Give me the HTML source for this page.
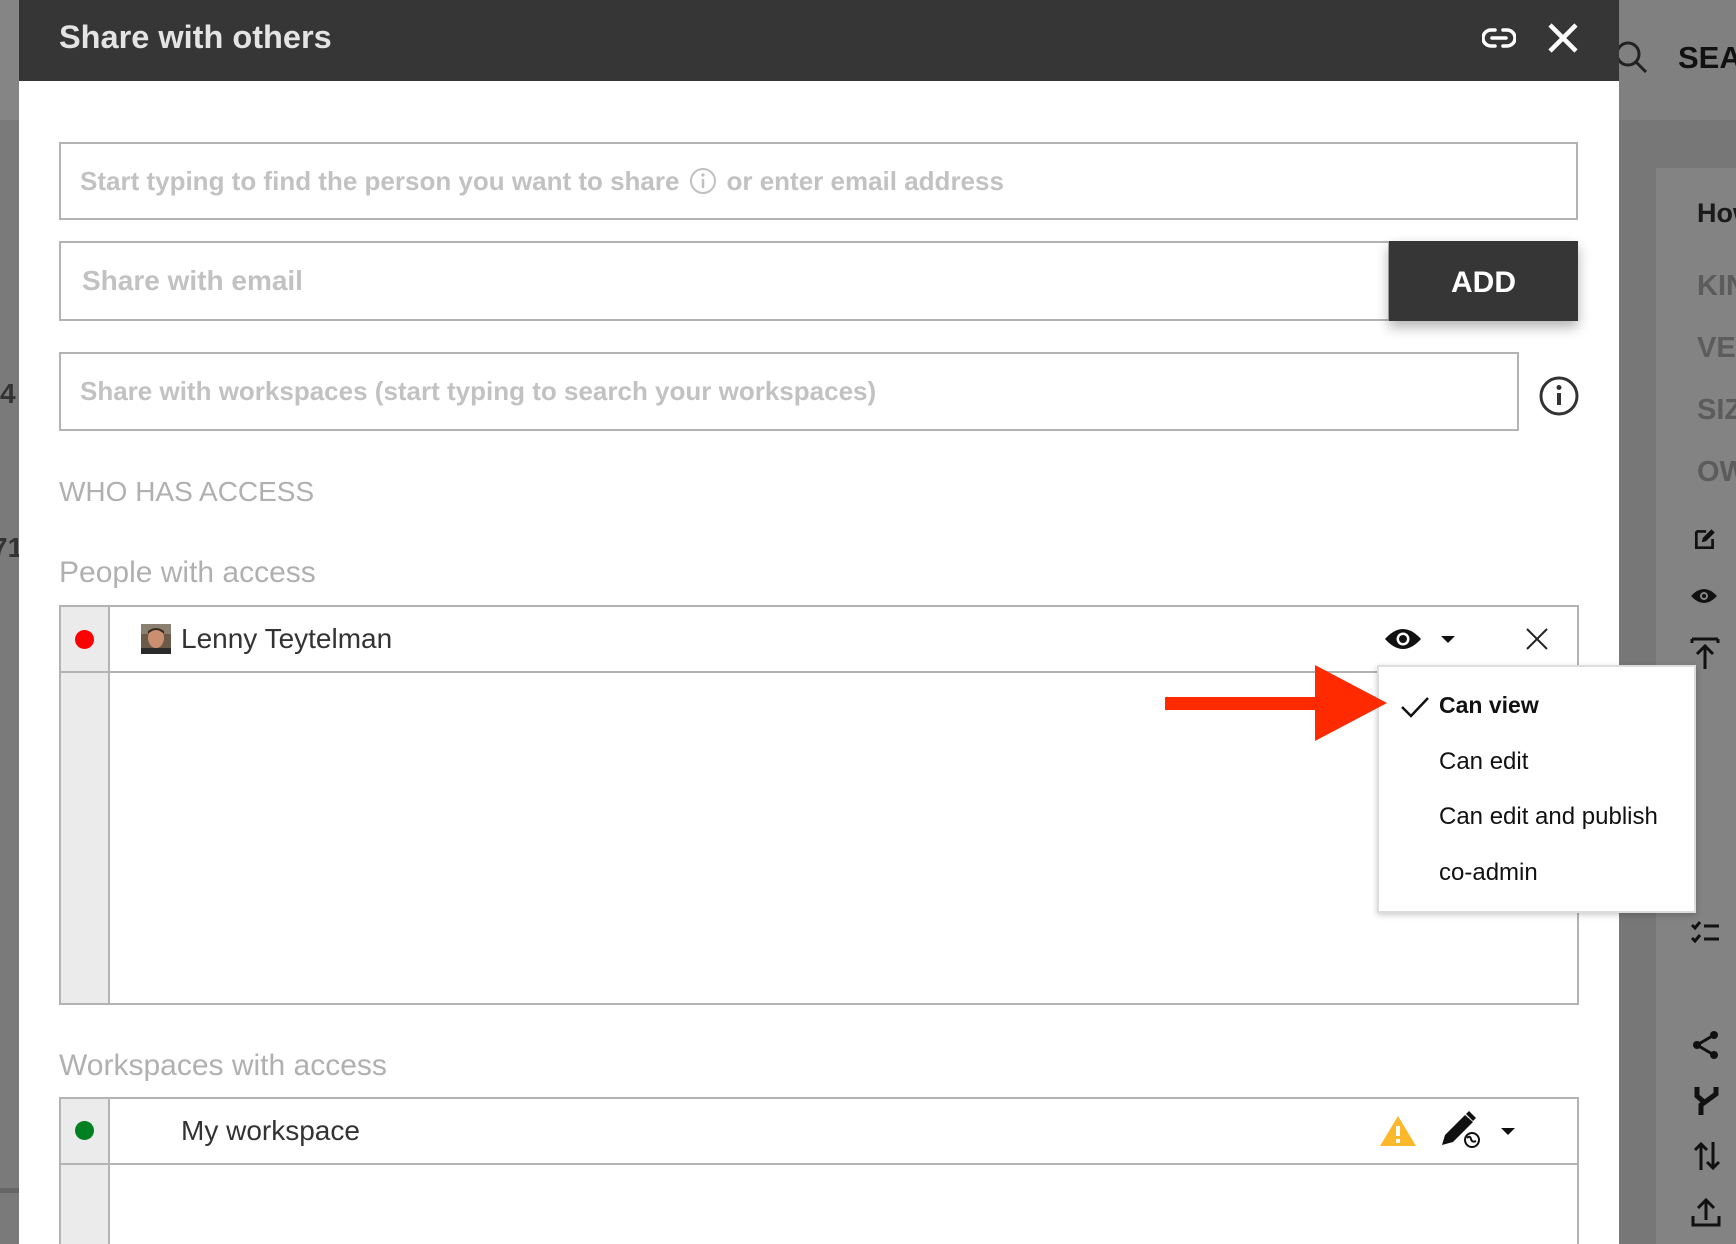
<!DOCTYPE html>
<html><head><meta charset="utf-8"><style>
*{box-sizing:border-box;margin:0;padding:0}
html{width:1736px;height:1244px;overflow:hidden}
body{width:1736px;height:1244px;overflow:hidden;position:relative;background:#777;font-family:"Liberation Sans",Arial,sans-serif}
.abs{position:absolute}
.inp{position:absolute;border:2px solid #b3b3b3;background:#fff;color:#c2c2c2;font-size:26px;font-weight:bold;display:flex;align-items:center;padding-left:19px}
.lbl{position:absolute;left:59px;color:#b0b0b0;font-size:30px}
.g{color:#5c5c5c;font-weight:bold;font-size:29px;position:absolute;left:1697px}
.menu div{position:absolute;left:60px;font-size:24px;color:#111}
</style></head><body>
<div class="abs" style="left:0;top:0;width:19px;height:1244px;background:#7a7a7a"></div>
<div class="abs" style="left:0;top:0;width:19px;height:120px;background:#858585"></div>
<div class="abs" style="left:0;top:378px;font-size:28px;font-weight:bold;color:#333">4</div>
<div class="abs" style="left:-8px;top:532px;font-size:28px;font-weight:bold;color:#333">71</div>
<div class="abs" style="left:1619px;top:0;width:117px;height:120px;background:#808080"></div>
<div class="abs" style="left:1656px;top:168px;width:80px;height:1076px;background:#838383"></div>
<svg class="abs" style="left:1614px;top:40px" width="36" height="36" viewBox="0 0 36 36"><circle cx="14" cy="14" r="11" fill="none" stroke="#222" stroke-width="3"/><path d="M22 22l10 10" stroke="#222" stroke-width="3"/></svg>
<div class="abs" style="left:1678px;top:40px;font-size:31px;font-weight:bold;color:#111">SEA</div>
<div class="abs" style="left:1697px;top:198px;font-size:27px;font-weight:bold;color:#1a1a1a">How</div>
<div class="g" style="top:270px">KIN</div>
<div class="g" style="top:332px">VER</div>
<div class="g" style="top:394px">SIZ</div>
<div class="g" style="top:456px">OW</div>
<svg class="abs" style="left:1692px;top:526px" width="26" height="26" viewBox="0 0 24 24"><path d="M4 5h9M4 5v15h15v-8" fill="none" stroke="#111" stroke-width="2.5"/><path d="M9 15l1-4 8-8 3 3-8 8z" fill="#111"/></svg>
<svg class="abs" style="left:1690px;top:586px" width="28" height="20" viewBox="0 0 28 20"><path d="M1 10Q14-4 27 10Q14 24 1 10z" fill="#111"/><circle cx="14" cy="10" r="4" fill="#838383"/><circle cx="14" cy="10" r="2" fill="#111"/></svg>
<svg class="abs" style="left:1690px;top:636px" width="30" height="34" viewBox="0 0 30 34"><path d="M2 3h26M2 3v4M28 3v4M15 33V10M7 18l8-8 8 8" fill="none" stroke="#111" stroke-width="3"/></svg>
<svg class="abs" style="left:1690px;top:918px" width="30" height="30" viewBox="0 0 30 30"><path d="M2 7l3 3 5-6M2 20l3 3 5-6M14 8h15M14 21h15" fill="none" stroke="#111" stroke-width="3"/></svg>
<svg class="abs" style="left:1692px;top:1030px" width="28" height="30" viewBox="0 0 28 30"><circle cx="22" cy="5" r="4" fill="#111"/><circle cx="5" cy="15" r="4" fill="#111"/><circle cx="22" cy="25" r="4" fill="#111"/><path d="M22 5L5 15l17 10" fill="none" stroke="#111" stroke-width="3"/></svg>
<svg class="abs" style="left:1692px;top:1085px" width="28" height="32" viewBox="0 0 28 32"><path d="M5 2v9l7 6M24 2v7L9 20v10" fill="none" stroke="#111" stroke-width="5"/></svg>
<svg class="abs" style="left:1692px;top:1140px" width="30" height="32" viewBox="0 0 30 32"><path d="M9 30V4M3 10l6-6 6 6M21 2v26M15 22l6 6 6-6" fill="none" stroke="#111" stroke-width="3"/></svg>
<svg class="abs" style="left:1690px;top:1196px" width="32" height="32" viewBox="0 0 32 32"><path d="M3 20v9h26v-9M16 24V4M8 12l8-8 8 8" fill="none" stroke="#111" stroke-width="3"/></svg>
<div class="abs" style="left:0;top:1188px;width:19px;height:5px;background:#666"></div>

<div class="abs" style="left:19px;top:0;width:1600px;height:1244px;background:#fff"></div>
<div class="abs" style="left:19px;top:0;width:1600px;height:81px;background:#363636"></div>
<div class="abs" style="left:59px;top:19px;font-size:32.5px;font-weight:bold;color:#e4e4e4">Share with others</div>
<svg class="abs" style="left:1482px;top:27px" width="34" height="22" viewBox="0 0 34 22"><path d="M13 3H9a8 8 0 0 0 0 16h4M21 3h4a8 8 0 0 1 0 16h-4M10 11h14" fill="none" stroke="#fff" stroke-width="3.5" stroke-linecap="round"/></svg>
<svg class="abs" style="left:1547px;top:22px" width="32" height="32" viewBox="0 0 32 32"><path d="M3 3l26 26M29 3L3 29" stroke="#fff" stroke-width="4.5"/></svg>

<div class="inp" style="left:59px;top:142px;width:1519px;height:78px">Start typing to find the person you want to share<svg width="28" height="28" viewBox="0 0 28 28" style="margin:0 9px 0 10px"><circle cx="14" cy="14" r="12" fill="none" stroke="#c0c0c0" stroke-width="2"/><path d="M14 12v9" stroke="#c0c0c0" stroke-width="2.5"/><circle cx="14" cy="8" r="1.6" fill="#c0c0c0"/></svg>or enter email address</div>
<div class="inp" style="left:59px;top:241px;width:1331px;height:80px;padding-left:21px;font-size:28px">Share with email</div>
<div class="abs" style="left:1389px;top:241px;width:189px;height:80px;background:#363636;color:#fff;font-size:30px;font-weight:bold;display:flex;align-items:center;justify-content:center;padding-top:3px;box-shadow:0 6px 12px rgba(0,0,0,.3)">ADD</div>
<div class="inp" style="left:59px;top:352px;width:1460px;height:79px">Share with workspaces (start typing to search your workspaces)</div>
<svg class="abs" style="left:1538px;top:375px" width="42" height="42" viewBox="0 0 42 42"><circle cx="21" cy="21" r="18" fill="none" stroke="#333" stroke-width="3"/><path d="M21 18v12" stroke="#333" stroke-width="4"/><circle cx="21" cy="12.5" r="2.5" fill="#333"/></svg>

<div class="lbl" style="top:476px;font-size:28px">WHO HAS ACCESS</div>
<div class="lbl" style="top:556px">People with access</div>

<div class="abs" style="left:59px;top:605px;width:1520px;height:400px;border:2px solid #b3b3b3"></div>
<div class="abs" style="left:61px;top:607px;width:49px;height:396px;background:#ebebeb;border-right:2px solid #b3b3b3"></div>
<div class="abs" style="left:110px;top:671px;width:1468px;height:2px;background:#b3b3b3"></div>
<div class="abs" style="left:61px;top:671px;width:49px;height:2px;background:#b3b3b3"></div>
<div class="abs" style="left:75px;top:630px;width:19px;height:19px;border-radius:50%;background:#f00"></div>
<svg class="abs" style="left:141px;top:624px" width="30" height="30" viewBox="0 0 30 30"><rect width="30" height="30" fill="#6b5a4a"/><rect y="0" width="30" height="10" fill="#8a7f70"/><ellipse cx="15" cy="14" rx="8" ry="10" fill="#c98f70"/><path d="M7 10q8-8 16 0v-3q-8-6-16 0z" fill="#3a2a20"/><rect y="24" width="30" height="6" fill="#2a2a2a"/></svg>
<div class="abs" style="left:181px;top:623px;font-size:28px;color:#333">Lenny Teytelman</div>
<svg class="abs" style="left:1384px;top:627px" width="38" height="24" viewBox="0 0 38 24"><path d="M1 12Q19-8 37 12Q19 32 1 12z" fill="#111"/><circle cx="19" cy="12" r="6.5" fill="#fff"/><circle cx="19" cy="12" r="4" fill="#111"/></svg>
<svg class="abs" style="left:1441px;top:636px" width="14" height="8"><path d="M0 0h14L7 7z" fill="#111"/></svg>
<svg class="abs" style="left:1526px;top:628px" width="22" height="22" viewBox="0 0 22 22"><path d="M1 1l20 20M21 1L1 21" stroke="#222" stroke-width="2"/></svg>

<div class="lbl" style="top:1049px">Workspaces with access</div>
<div class="abs" style="left:59px;top:1097px;width:1520px;height:147px;border:2px solid #b3b3b3;border-bottom:none"></div>
<div class="abs" style="left:61px;top:1099px;width:49px;height:145px;background:#ebebeb;border-right:2px solid #b3b3b3"></div>
<div class="abs" style="left:61px;top:1163px;width:1517px;height:2px;background:#b3b3b3"></div>
<div class="abs" style="left:75px;top:1121px;width:19px;height:19px;border-radius:50%;background:#008020"></div>
<div class="abs" style="left:181px;top:1115px;font-size:28px;color:#333">My workspace</div>
<svg class="abs" style="left:1379px;top:1115px" width="38" height="32" viewBox="0 0 38 32"><path d="M19 1L37 31H1z" fill="#fbb82b"/><rect x="17" y="11" width="4" height="10" fill="#fff"/><rect x="17" y="24" width="4" height="4" fill="#fff"/></svg>
<svg class="abs" style="left:1442px;top:1111px" width="40" height="38" viewBox="0 0 40 38"><path d="M0 34l3-10 20-20 8 7-20 20-11 3z" fill="#111"/><path d="M24 3l3-3 7 7-3 3z" fill="#111"/><circle cx="30" cy="29" r="7" fill="#fff" stroke="#111" stroke-width="2"/><path d="M25 27q3-3 4 1t5 2" fill="none" stroke="#111" stroke-width="2"/></svg>
<svg class="abs" style="left:1501px;top:1128px" width="14" height="8"><path d="M0 0h14L7 7z" fill="#111"/></svg>

<div class="abs menu" style="left:1377px;top:665px;width:319px;height:248px;background:#fff;border:2px solid #ddd;box-shadow:0 2px 6px rgba(0,0,0,.2)">
<svg class="abs" style="left:21px;top:28px" width="30" height="24" viewBox="0 0 30 24"><path d="M2 12l9 9L28 3" fill="none" stroke="#111" stroke-width="2.5"/></svg>
<div style="top:25px;font-weight:bold;font-size:23px">Can view</div>
<div style="top:81px">Can edit</div>
<div style="top:136px">Can edit and publish</div>
<div style="top:192px">co-admin</div>
</div>
<svg class="abs" style="left:1160px;top:660px" width="232" height="86" viewBox="0 0 232 86"><path d="M5 37h150V5l72 38-72 38V50H5z" fill="#ff2a00"/></svg>
</body></html>
